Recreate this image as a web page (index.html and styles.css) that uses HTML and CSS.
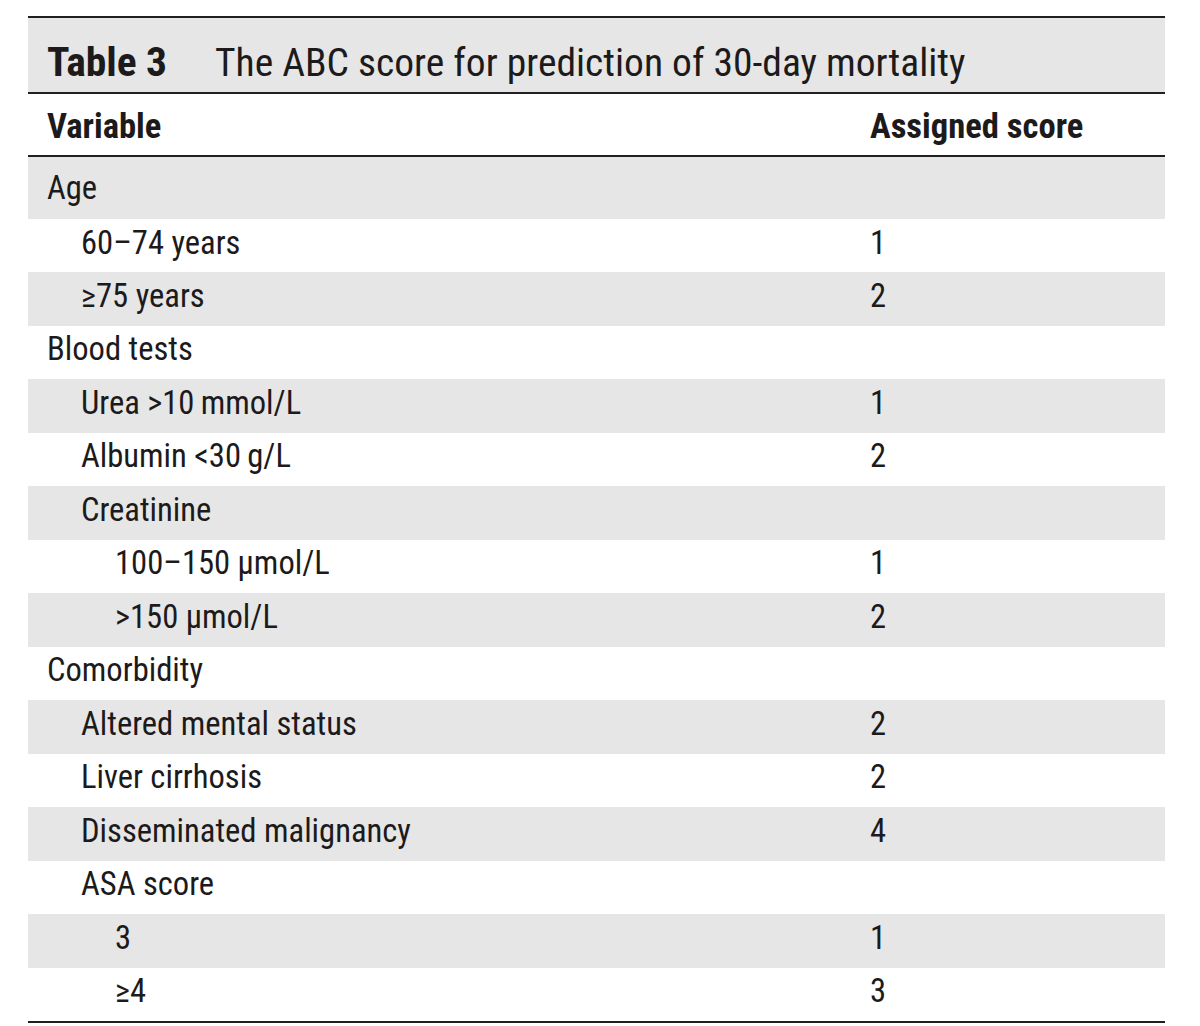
FILE: index.html
```
<!DOCTYPE html>
<html lang="en">
<head>
<meta charset="utf-8">
<title>Table 3</title>
<link rel="stylesheet" href="styles.css">
</head>
<body>
<div class="tbl">
  <div class="title"><span class="label">Table 3</span><span class="caption">The ABC score for prediction of 30-day mortality</span></div>
  <table>
    <thead>
      <tr><th class="var">Variable</th><th class="score">Assigned score</th></tr>
    </thead>
    <tbody>
      <tr class="shade first"><td class="l0">Age</td><td class="score"></td></tr>
      <tr><td class="l1">60–74 years</td><td class="score">1</td></tr>
      <tr class="shade"><td class="l1">≥75 years</td><td class="score">2</td></tr>
      <tr><td class="l0">Blood tests</td><td class="score"></td></tr>
      <tr class="shade"><td class="l1">Urea &gt;10&#8201;mmol/L</td><td class="score">1</td></tr>
      <tr><td class="l1">Albumin &lt;30&#8201;g/L</td><td class="score">2</td></tr>
      <tr class="shade"><td class="l1">Creatinine</td><td class="score"></td></tr>
      <tr><td class="l2">100–150 µmol/L</td><td class="score">1</td></tr>
      <tr class="shade"><td class="l2">&gt;150 µmol/L</td><td class="score">2</td></tr>
      <tr><td class="l0">Comorbidity</td><td class="score"></td></tr>
      <tr class="shade"><td class="l1">Altered mental status</td><td class="score">2</td></tr>
      <tr><td class="l1">Liver cirrhosis</td><td class="score">2</td></tr>
      <tr class="shade"><td class="l1">Disseminated malignancy</td><td class="score">4</td></tr>
      <tr><td class="l1">ASA score</td><td class="score"></td></tr>
      <tr class="shade"><td class="l2">3</td><td class="score">1</td></tr>
      <tr class="last"><td class="l2">≥4</td><td class="score">3</td></tr>
    </tbody>
  </table>
</div>
</body>
</html>
```
FILE: styles.css
```
body {
  margin: 0;
  background: #ffffff;
  color: #1c1a1b;
  font-family: "Roboto Condensed", "Roboto", sans-serif;
  font-stretch: condensed;
}

.tbl {
  margin: 16px 0 0 28px;
  width: 1137px;
  border-top: 2px solid #231f20;
}

.title {
  background: #e6e6e6;
  height: 74px;
  box-sizing: border-box;
  padding: 13.5px 0 0 19px;
  font-size: 39.5px;
  line-height: 60px;
  white-space: nowrap;
}

.label {
  display: inline-block;
  width: 168px;
  font-size: 41.5px;
  font-weight: 700;
}

table {
  width: 100%;
  table-layout: fixed;
  border-collapse: separate;
  border-spacing: 0;
  border-top: 2px solid #231f20;
  border-bottom: 2px solid #231f20;
}

th, td {
  padding: 0;
  text-align: left;
  vertical-align: top;
  white-space: nowrap;
}

thead tr { height: 63px; }

thead th {
  font-size: 34.6px;
  font-weight: 700;
  line-height: 40px;
  padding-top: 11.5px;
  border-bottom: 2px solid #231f20;
}

th.var { padding-left: 19px; }

.score {
  width: 295px;
  padding-left: 19px;
}

tbody tr { height: 53.47px; }
tbody tr.first { height: 62px; }

tbody td {
  font-size: 32.6px;
  line-height: 40px;
  padding-top: 3.5px;
}

tbody tr.first td { padding-top: 11px; }

tr.shade td { background: #e6e6e6; }

.l0 { padding-left: 19px; }
.l1 { padding-left: 53px; }
.l2 { padding-left: 87px; }
```
